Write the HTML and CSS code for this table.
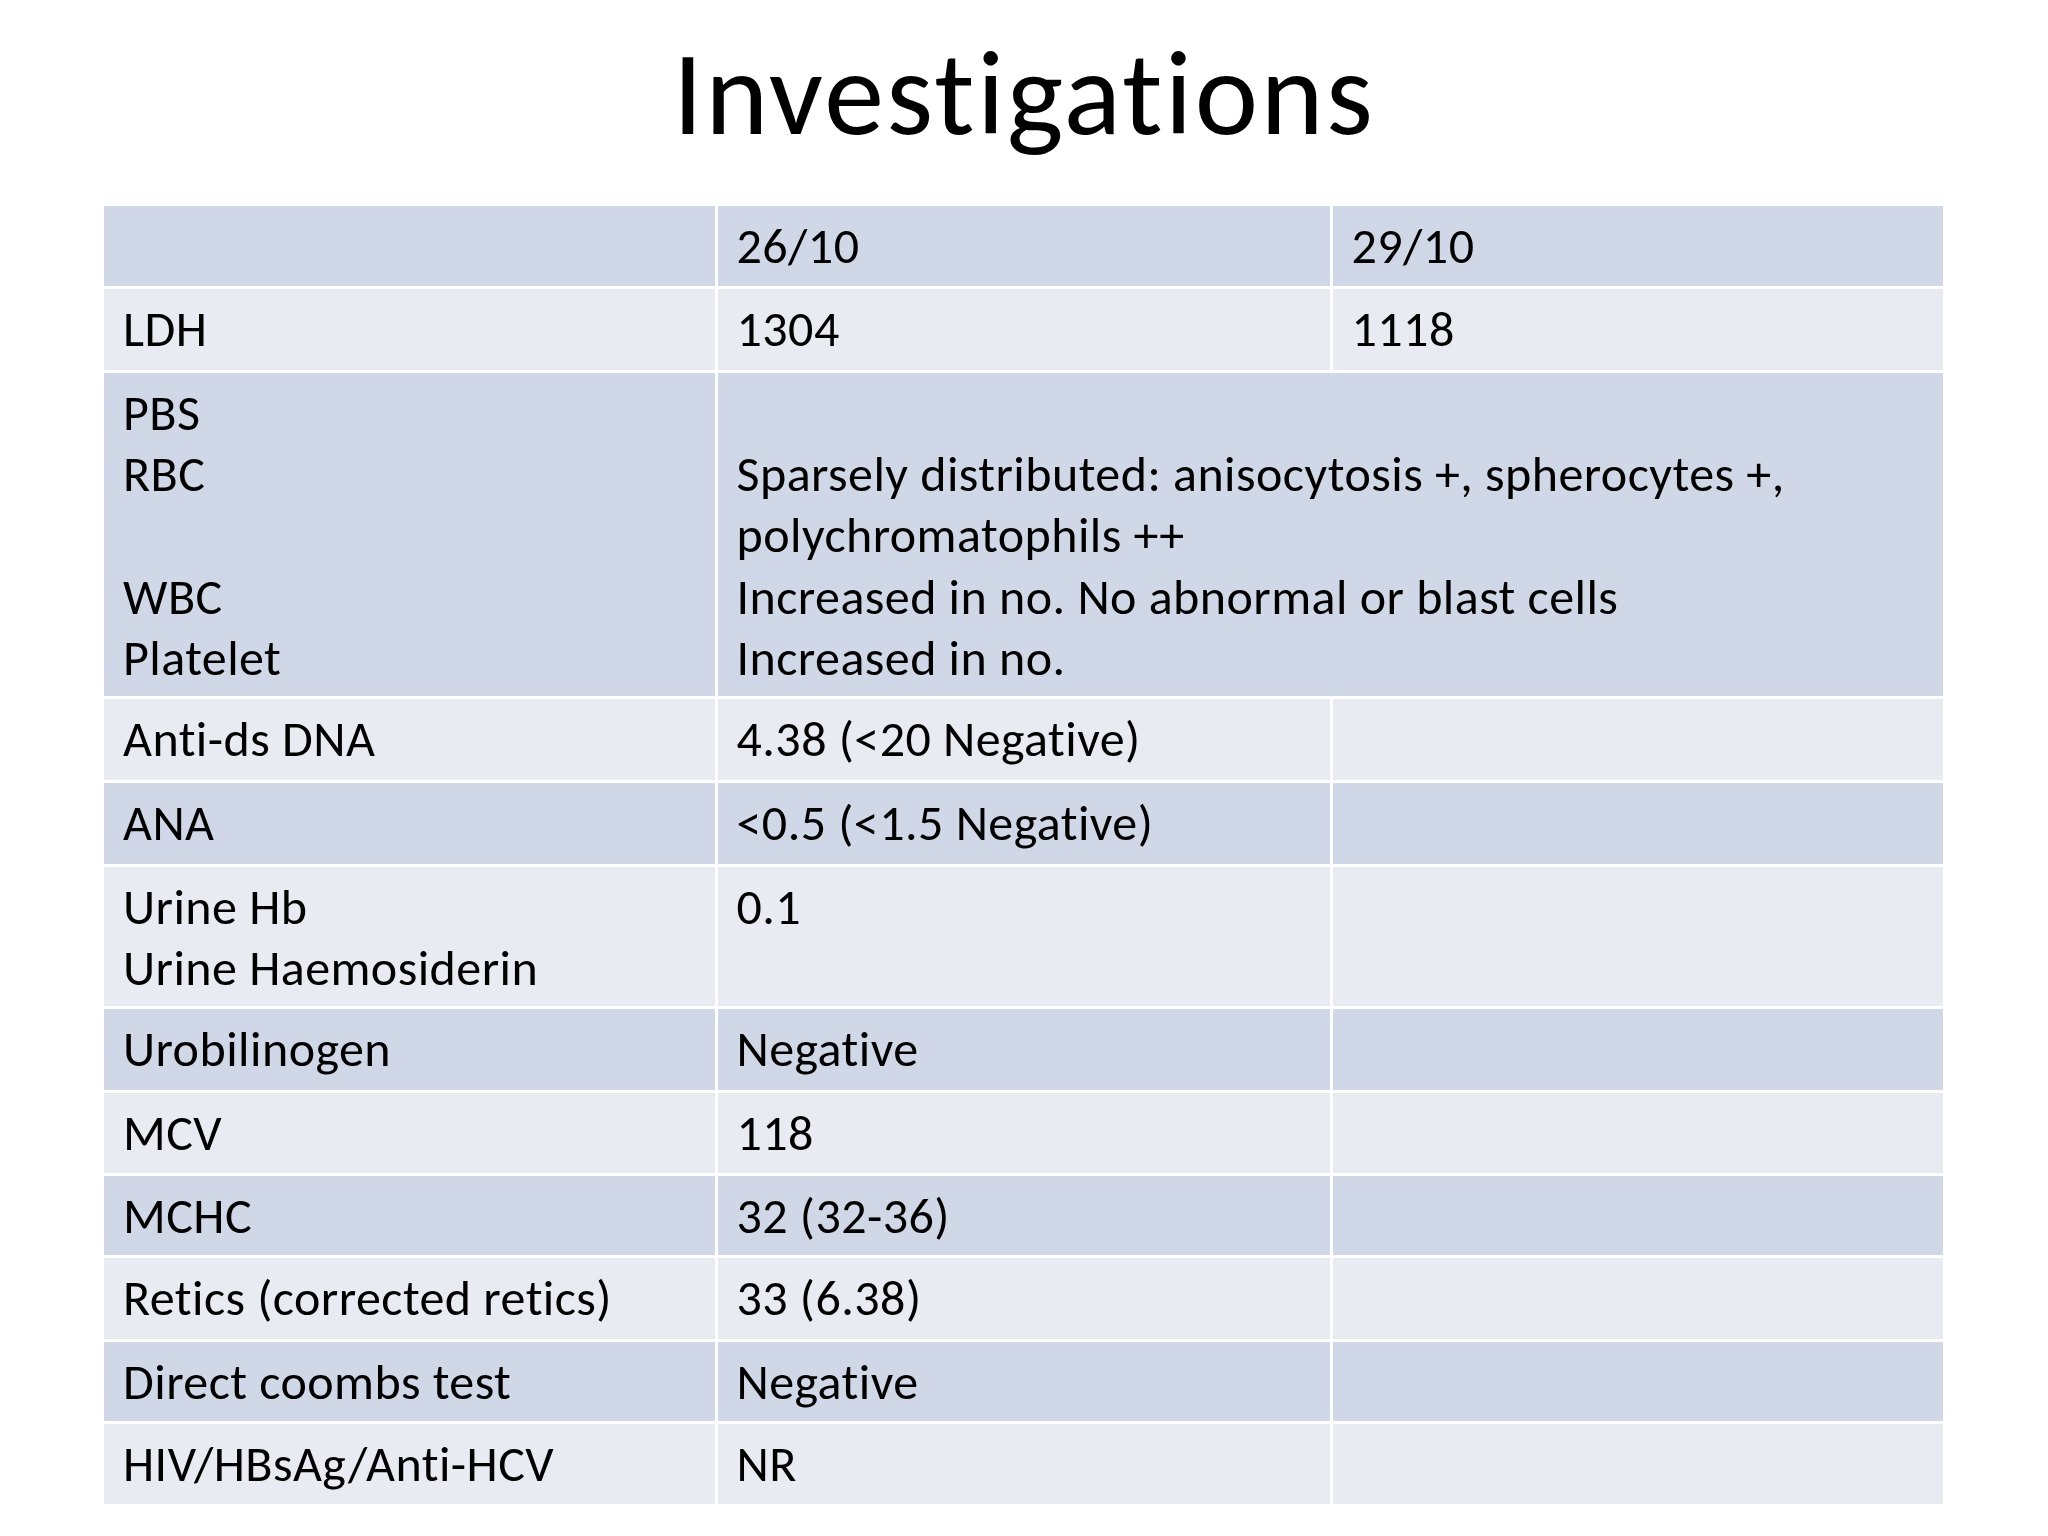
FILE: index.html
```html
<!DOCTYPE html>
<html>
<head>
<meta charset="utf-8">
<link rel="stylesheet" href="styles.css">
</head>
<body>
<div class="slide">
  <header class="title-bar"><h1 class="title">Investigations</h1></header>
  <table class="inv">
    <colgroup><col class="c1"><col class="c2"><col class="c3"></colgroup>
    <tr class="dark h81"><td></td><td>26/10</td><td>29/10</td></tr>
    <tr class="light h84"><td>LDH</td><td>1304</td><td>1118</td></tr>
    <tr class="dark h326"><td>PBS<br>RBC<br><br>WBC<br>Platelet</td><td colspan="2"><br>Sparsely distributed: anisocytosis +, spherocytes +,<br>polychromatophils ++<br>Increased in no. No abnormal or blast cells<br>Increased in no.</td></tr>
    <tr class="light h84"><td>Anti-ds DNA</td><td>4.38 (&lt;20 Negative)</td><td></td></tr>
    <tr class="dark h84"><td>ANA</td><td>&lt;0.5 (&lt;1.5 Negative)</td><td></td></tr>
    <tr class="light h142"><td>Urine Hb<br>Urine Haemosiderin</td><td>0.1</td><td></td></tr>
    <tr class="dark h84"><td>Urobilinogen</td><td>Negative</td><td></td></tr>
    <tr class="light h83"><td>MCV</td><td>118</td><td></td></tr>
    <tr class="dark h82"><td>MCHC</td><td>32 (32-36)</td><td></td></tr>
    <tr class="light h84"><td>Retics (corrected retics)</td><td>33 (6.38)</td><td></td></tr>
    <tr class="dark h82"><td>Direct coombs test</td><td>Negative</td><td></td></tr>
    <tr class="light h83"><td>HIV/HBsAg/Anti-HCV</td><td>NR</td><td></td></tr>
  </table>
</div>
</body>
</html>
```
FILE: styles.css
```css
html, body {
  margin: 0;
  padding: 0;
  background: #ffffff;
}
body {
  font-family: Carlito, Lato, "Open Sans", sans-serif;
  font-variant-ligatures: none;
  color: #000000;
}
.slide {
  width: 2048px;
  height: 1536px;
  overflow: hidden;
}
.title-bar {
  height: 206px;
  box-sizing: border-box;
  padding-top: 28px;
}
.title {
  margin: 0;
  text-align: center;
  font-weight: normal;
  font-size: 120px;
  line-height: 130px;
  letter-spacing: 2.4px;
}
.inv {
  margin-left: 104px;
  width: 1839px;
  table-layout: fixed;
  border-collapse: collapse;
}
.c1 { width: 612px; }
.c2 { width: 615px; }
.c3 { width: 612px; }
.inv td {
  border: 3px solid #ffffff;
  vertical-align: top;
  padding: 9px 18px 0 19px;
  font-size: 50px;
  letter-spacing: 0.45px;
  line-height: 61.4px;
  white-space: nowrap;
  box-sizing: border-box;
}
.inv tr:first-child td { border-top: 0; }
.inv td:first-child { border-left: 0; }
.inv td:last-child { border-right: 0; }
.dark td { background: #d0d7e6; }
.light td { background: #e8ebf2; }
.h81 { height: 81px; }
.h82 { height: 82px; }
.h83 { height: 83px; }
.h84 { height: 84px; }
.h142 { height: 142px; }
.h326 { height: 326px; }
```
